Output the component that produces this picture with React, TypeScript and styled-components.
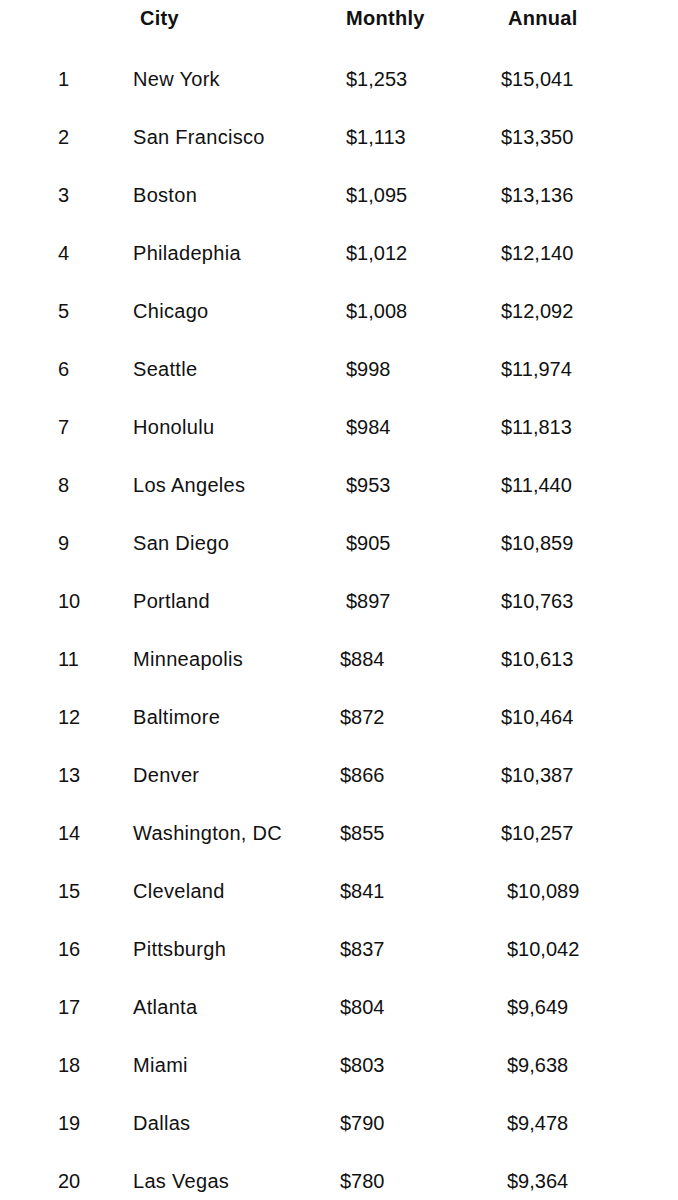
import React from "react";
import styled, { createGlobalStyle } from "styled-components";

const Global = createGlobalStyle`
  html, body { margin: 0; padding: 0; background: #fff; }
  body { font-family: "Liberation Sans", Arial, Helvetica, sans-serif; color: #111; }
`;

const Table = styled.div`
  display: grid;
  grid-template-columns: 75px 207px 161px 1fr;
  padding-left: 58px;
  width: 678px;
  box-sizing: border-box;
`;

const HeaderRow = styled.div`
  display: contents;
`;

const HeadCell = styled.div<{ $shift?: number }>`
  height: 50px;
  line-height: 36px;
  font-size: 20px;
  font-weight: 700;
  letter-spacing: 0.3px;
  padding-left: ${(p) => p.$shift ?? 0}px;
  white-space: nowrap;
`;

const Row = styled.div`
  display: contents;
`;

const Cell = styled.div<{ $shift?: number; $text?: boolean }>`
  height: 58px;
  line-height: 58px;
  font-size: 20px;
  letter-spacing: ${(p) => (p.$text ? "0.3px" : "0")};
  padding-left: ${(p) => p.$shift ?? 0}px;
  white-space: nowrap;
`;

const data: [string, string, string][] = [
  ["New York", "$1,253", "$15,041"],
  ["San Francisco", "$1,113", "$13,350"],
  ["Boston", "$1,095", "$13,136"],
  ["Philadephia", "$1,012", "$12,140"],
  ["Chicago", "$1,008", "$12,092"],
  ["Seattle", "$998", "$11,974"],
  ["Honolulu", "$984", "$11,813"],
  ["Los Angeles", "$953", "$11,440"],
  ["San Diego", "$905", "$10,859"],
  ["Portland", "$897", "$10,763"],
  ["Minneapolis", "$884", "$10,613"],
  ["Baltimore", "$872", "$10,464"],
  ["Denver", "$866", "$10,387"],
  ["Washington, DC", "$855", "$10,257"],
  ["Cleveland", "$841", "$10,089"],
  ["Pittsburgh", "$837", "$10,042"],
  ["Atlanta", "$804", "$9,649"],
  ["Miami", "$803", "$9,638"],
  ["Dallas", "$790", "$9,478"],
  ["Las Vegas", "$780", "$9,364"],
];

export default function App() {
  return (
    <>
      <Global />
      <Table>
        <HeaderRow>
          <HeadCell />
          <HeadCell $shift={7}>City</HeadCell>
          <HeadCell $shift={6}>Monthly</HeadCell>
          <HeadCell $shift={7}>Annual</HeadCell>
        </HeaderRow>
        {data.map(([city, monthly, annual], i) => (
          <Row key={city}>
            <Cell>{i + 1}</Cell>
            <Cell $text>{city}</Cell>
            <Cell $shift={i < 10 ? 6 : 0}>{monthly}</Cell>
            <Cell $shift={i >= 14 ? 6 : 0}>{annual}</Cell>
          </Row>
        ))}
      </Table>
    </>
  );
}
